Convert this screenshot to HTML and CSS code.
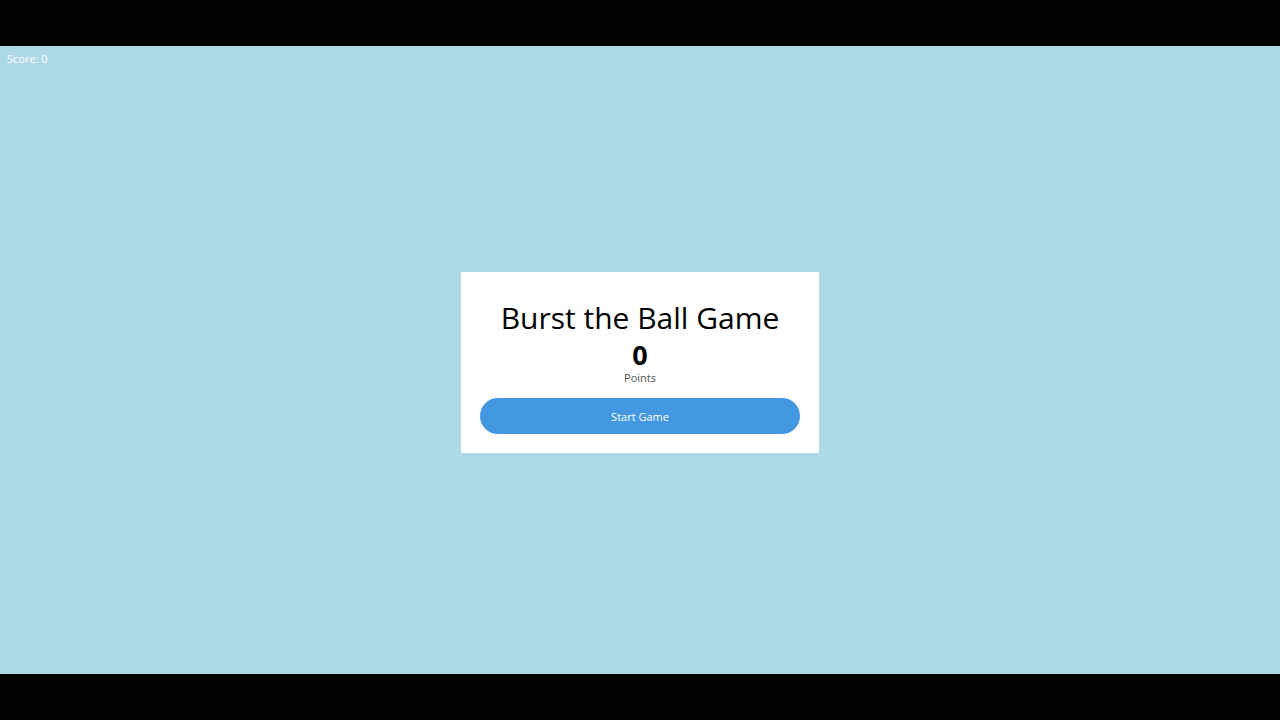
FILE: index.html
```html
<!DOCTYPE html>
<html>
<head>
    <title>Burst the Ball Game</title>
    <link rel="stylesheet" href="styles.css">
</head>
<body>
    <div class="bar"></div>
    <div class="game-area" id="gameArea">
        <div class="score" id="score">Score: 0</div>
        <div class="panel">
            <h1>Burst the Ball Game</h1>
            <div class="points" id="points">0</div>
            <div class="points-label">Points</div>
            <button class="start-button" id="startButton">Start Game</button>
        </div>
    </div>
    <div class="bar"></div>
</body>
</html>
```

FILE: styles.css
```css
* {
    box-sizing: border-box;
}

body {
    margin: 0;
    height: 720px;
    background: #000;
    font-family: 'Open Sans', 'Noto Sans', sans-serif;
    display: flex;
    flex-direction: column;
}

.bar {
    height: 46px;
    background: #000;
}

.game-area {
    position: relative;
    flex: 1;
    background-color: #add8e6;
    display: flex;
    align-items: center;
    justify-content: center;
}

.score {
    position: absolute;
    top: 5px;
    left: 7px;
    color: #fff;
    font-size: 11px;
}

.panel {
    width: 358px;
    height: 181px;
    margin-top: 5px;
    background: #fff;
    padding: 26px 19px 0;
    text-align: center;
}

h1 {
    margin: 0;
    font-size: 30px;
    font-weight: 400;
    line-height: 40px;
    color: #000;
}

.points {
    margin-top: 2px;
    font-size: 27px;
    font-weight: 700;
    line-height: 30px;
    color: #000;
}

.points-label {
    font-size: 11px;
    line-height: 16px;
    color: #555;
}

.start-button {
    display: block;
    width: 320px;
    height: 36px;
    margin: 12px auto 0;
    background-color: #4399e1;
    color: #fff;
    border: none;
    border-radius: 18px;
    font-family: inherit;
    font-size: 11px;
    cursor: pointer;
}
```
